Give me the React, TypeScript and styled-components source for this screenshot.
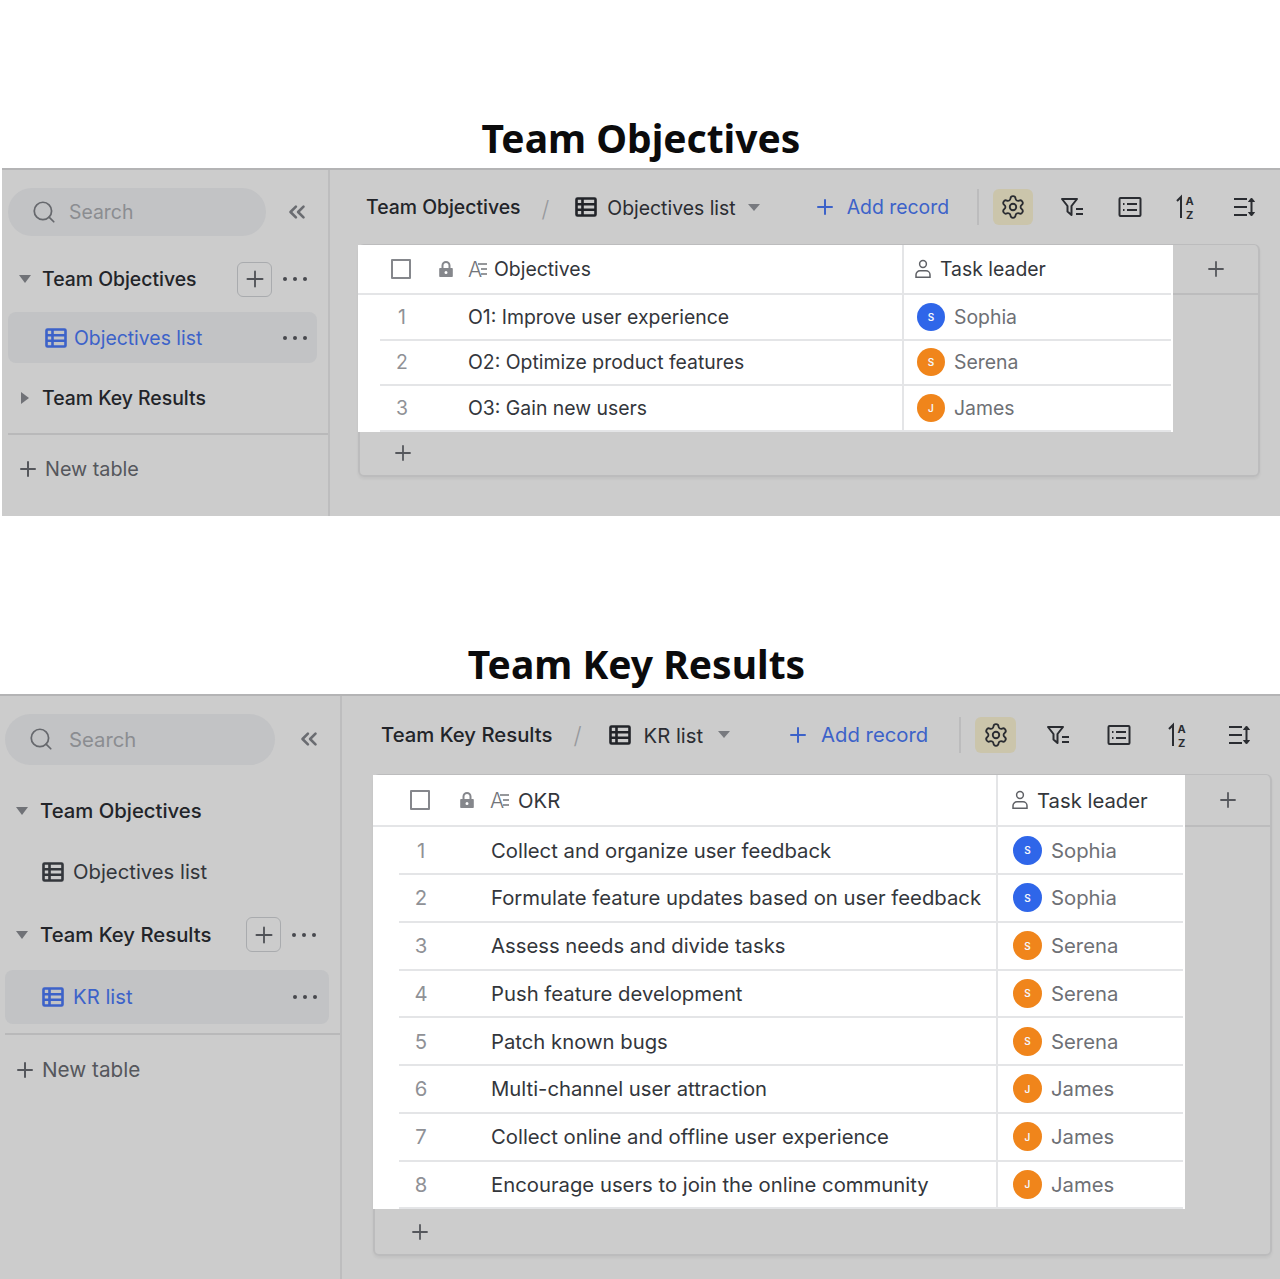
import React from "react";
import styled, { createGlobalStyle } from "styled-components";
import { ChevronsLeft, Plus, Search, Settings } from "lucide-react";

const GlobalStyle = createGlobalStyle`
  html, body { margin: 0; padding: 0; background: #fff; }
  body { font-family: Inter, "Liberation Sans", sans-serif; }
  * { box-sizing: border-box; }
`;

interface Metrics {
  left: number;
  font: number;
  sidebar: number;
  searchW: number;
  searchH: number;
  searchGap: number;
  collapseGap: number;
  groupH: number;
  groupRight: number;
  caretGap: number;
  itemH: number;
  itemW: number;
  itemRight: number;
  itemGap: number;
  sideInset: number;
  newTableLeft: number;
  toolbarH: number;
  mainLeft: number;
  slashRight: number;
  viewLeft: number;
  viewRight: number;
  addGap: number;
  addInnerGap: number;
  dividerGap: number;
  toolW: number;
  iconGap: number;
  frameLeft: number;
  frameRight: number;
  frameBottom: number;
  headerH: number;
  rowH: number;
  firstCol: number;
  secondCol: number;
  rowInset: number;
  indexGap: number;
  avatar: number;
  addRowH: number;
  addRowLeft: number;
  checkGap: number;
  fieldLeft: number;
  fieldRight: number;
  leaderLeft: number;
  ownerLeft: number;
}

const objectivesMetrics: Metrics = {
  left: 2,
  font: 19.4,
  sidebar: 328,
  searchW: 258,
  searchH: 48,
  searchGap: 12,
  collapseGap: 18,
  groupH: 34,
  groupRight: 19,
  caretGap: 11,
  itemH: 51,
  itemW: 309,
  itemRight: 8,
  itemGap: 7,
  sideInset: 6,
  newTableLeft: 14,
  toolbarH: 74,
  mainLeft: 36,
  slashRight: 26,
  viewLeft: 10,
  viewRight: 12,
  addGap: 53,
  addInnerGap: 10,
  dividerGap: 28,
  toolW: 40,
  iconGap: 17,
  frameLeft: 28,
  frameRight: 20,
  frameBottom: 39,
  headerH: 50,
  rowH: 45.6,
  firstCol: 546,
  secondCol: 269,
  rowInset: 22,
  indexGap: 44,
  avatar: 28,
  addRowH: 43,
  addRowLeft: 31,
  checkGap: 27,
  fieldLeft: 14,
  fieldRight: 6,
  leaderLeft: 10,
  ownerLeft: 13,
};

const keyResultsMetrics: Metrics = {
  left: 0,
  font: 20.3,
  sidebar: 342,
  searchW: 270,
  searchH: 51,
  searchGap: 15,
  collapseGap: 21,
  groupH: 36,
  groupRight: 22,
  caretGap: 12,
  itemH: 54,
  itemW: 324,
  itemRight: 10,
  itemGap: 9,
  sideInset: 5,
  newTableLeft: 13,
  toolbarH: 78,
  mainLeft: 39,
  slashRight: 27,
  viewLeft: 13,
  viewRight: 15,
  addGap: 56,
  addInnerGap: 11,
  dividerGap: 31,
  toolW: 41,
  iconGap: 19,
  frameLeft: 31,
  frameRight: 8,
  frameBottom: 24,
  headerH: 52.5,
  rowH: 47.75,
  firstCol: 625,
  secondCol: 187,
  rowInset: 26,
  indexGap: 48,
  avatar: 29,
  addRowH: 45,
  addRowLeft: 33,
  checkGap: 29,
  fieldLeft: 15,
  fieldRight: 8,
  leaderLeft: 13,
  ownerLeft: 15,
};

const Page = styled.div`
  width: 1280px;
  height: 1279px;
  overflow: hidden;
  padding-top: 110px;
`;

const Heading = styled.h1<{ $shift: number; $top: number }>`
  margin: ${(p) => p.$top}px 0 2px;
  padding-right: ${(p) => p.$shift}px;
  padding-left: ${(p) => (p.$shift ? 0 : 2)}px;
  height: 56px;
  line-height: 56px;
  text-align: center;
  font-family: "Noto Sans", "Open Sans", sans-serif;
  font-size: 39px;
  font-weight: 700;
  color: #0b0b0c;
`;

const Panel = styled.section<{ $m: Metrics }>`
  display: flex;
  margin-left: ${(p) => p.$m.left}px;
  background: #cccccc;
  border-top: 2px solid #b4b4b5;
  font-size: ${(p) => p.$m.font}px;
  color: #222429;
`;

const Sidebar = styled.aside<{ $m: Metrics }>`
  flex: 0 0 ${(p) => p.$m.sidebar}px;
  padding-top: 18px;
  border-right: 2px solid #bdbdbe;
`;

const SearchRow = styled.div`
  display: flex;
  align-items: center;
`;

const SearchBox = styled.div<{ $m: Metrics }>`
  display: flex;
  align-items: center;
  gap: ${(p) => p.$m.searchGap}px;
  width: ${(p) => p.$m.searchW}px;
  height: ${(p) => p.$m.searchH}px;
  margin-left: ${(p) => p.$m.sideInset}px;
  padding-left: 23px;
  border-radius: 26px;
  background: #c2c3c5;
  color: #8b8d91;
`;

const Collapse = styled.span<{ $m: Metrics }>`
  display: flex;
  margin-left: ${(p) => p.$m.collapseGap}px;
  color: #6a6c71;
`;

const GroupRow = styled.div<{ $m: Metrics; $top: number }>`
  display: flex;
  align-items: center;
  height: ${(p) => p.$m.groupH}px;
  margin-top: ${(p) => p.$top}px;
  padding-left: ${(p) => p.$m.sideInset + 11}px;
  padding-right: ${(p) => p.$m.groupRight}px;
  font-weight: 500;
`;

const Caret = styled.span<{ $m: Metrics; $open: boolean }>`
  flex: 0 0 auto;
  width: 0;
  height: 0;
  margin-right: ${(p) => (p.$open ? p.$m.caretGap : p.$m.caretGap + 2)}px;
  border-style: solid;
  border-color: transparent;
  ${(p) =>
    p.$open
      ? "border-width: 8px 6px 0; border-top-color: #707277;"
      : "border-width: 6px 0 6px 8px; border-left-color: #707277; margin-left: 2px;"}
`;

const GroupName = styled.span`
  flex: 1;
`;

const AddTableButton = styled.span`
  display: flex;
  align-items: center;
  justify-content: center;
  width: 35px;
  height: 35px;
  margin-right: 11px;
  border: 1px solid #a9abae;
  border-radius: 6px;
  color: #505257;
`;

const Dots = styled.span`
  display: flex;
  gap: 6px;
  width: 26px;

  i {
    width: 4px;
    height: 4px;
    border-radius: 50%;
    background: #47494e;
  }
`;

const ItemRow = styled.div<{ $m: Metrics; $top: number; $active: boolean }>`
  display: flex;
  align-items: center;
  width: ${(p) => p.$m.itemW}px;
  height: ${(p) => p.$m.itemH}px;
  margin: ${(p) => p.$top}px 0 0 ${(p) => p.$m.sideInset}px;
  padding: 0 ${(p) => p.$m.itemRight}px 0 37px;
  border-radius: 8px;
  background: ${(p) => (p.$active ? "#c2c3c5" : "transparent")};
  color: ${(p) => (p.$active ? "#3c62c9" : "#33363b")};
`;

const ItemName = styled.span<{ $m: Metrics }>`
  flex: 1;
  margin-left: ${(p) => p.$m.itemGap}px;
`;

const SideDivider = styled.div<{ $m: Metrics; $top: number }>`
  height: 2px;
  margin: ${(p) => p.$top}px 0 0 ${(p) => p.$m.sideInset}px;
  background: #b9b9ba;
`;

const NewTable = styled.div<{ $m: Metrics }>`
  display: flex;
  align-items: center;
  gap: 5px;
  height: ${(p) => p.$m.groupH}px;
  margin-top: 17px;
  padding-left: ${(p) => p.$m.newTableLeft}px;
  font-size: 1.02em;
  color: #55575c;
`;

const Main = styled.main<{ $m: Metrics }>`
  flex: 1;
  min-width: 0;
  padding-bottom: ${(p) => p.$m.frameBottom}px;
`;

const Toolbar = styled.div<{ $m: Metrics }>`
  display: flex;
  align-items: center;
  height: ${(p) => p.$m.toolbarH}px;
  padding-left: ${(p) => p.$m.mainLeft}px;
`;

const Crumb = styled.span`
  font-weight: 500;
`;

const Slash = styled.span<{ $m: Metrics }>`
  margin: 2px ${(p) => p.$m.slashRight}px 0 21px;
  color: #97999d;
  font-size: 1.15em;
  font-weight: 300;
`;

const ViewName = styled.span<{ $m: Metrics }>`
  margin: 2px ${(p) => p.$m.viewRight}px 0 ${(p) => p.$m.viewLeft}px;
  color: #2b2d32;
`;

const ViewCaret = styled.span`
  width: 0;
  height: 0;
  border-style: solid;
  border-color: transparent;
  border-width: 7px 6px 0;
  border-top-color: #787a7f;
`;

const AddRecord = styled.span<{ $m: Metrics }>`
  display: flex;
  align-items: center;
  gap: ${(p) => p.$m.addInnerGap}px;
  margin-left: ${(p) => p.$m.addGap}px;
  color: #3c62c9;
`;

const ToolDivider = styled.span<{ $m: Metrics }>`
  width: 2px;
  height: 36px;
  margin: 0 14px 0 ${(p) => p.$m.dividerGap}px;
  background: #bcbcbd;
`;

const ToolButtons = styled.div<{ $m: Metrics }>`
  display: flex;
  align-items: center;
  gap: ${(p) => p.$m.iconGap}px;
`;

const ToolButton = styled.span<{ $m: Metrics; $active?: boolean }>`
  display: flex;
  align-items: center;
  justify-content: center;
  width: ${(p) => p.$m.toolW}px;
  height: 36px;
  margin-right: ${(p) => (p.$active ? 3 : 0)}px;
  border-radius: 6px;
  background: ${(p) => (p.$active ? "#cbc5ab" : "transparent")};
  color: #2a2c31;
`;

const Frame = styled.div<{ $m: Metrics }>`
  margin: 0 ${(p) => p.$m.frameRight}px 0 ${(p) => p.$m.frameLeft}px;
  border: 2px solid #bcbcbd;
  border-top-width: 1px;
  border-radius: 6px;
  box-shadow: 0 2px 3px rgba(0, 0, 0, 0.05);
`;

const FrameTop = styled.div`
  display: flex;
  align-items: flex-start;
  margin-left: -2px;
`;

const Sheet = styled.div<{ $m: Metrics }>`
  flex: 0 0 auto;
  width: ${(p) => p.$m.firstCol + p.$m.secondCol}px;
  padding-right: 2px;
  background: #fff;
`;

const HeaderRow = styled.div<{ $m: Metrics }>`
  display: grid;
  grid-template-columns: ${(p) => p.$m.firstCol}px 1fr;
  height: ${(p) => p.$m.headerH}px;
  border-bottom: 2px solid #e4e5e7;
  color: #33363b;
`;

const HeaderMain = styled.div<{ $m: Metrics }>`
  display: flex;
  align-items: center;
  padding-left: ${(p) => p.$m.rowInset + 11}px;
  border-right: 2px solid #e4e5e7;
`;

const Checkbox = styled.span<{ $m: Metrics }>`
  flex: 0 0 20px;
  height: 20px;
  margin-right: ${(p) => p.$m.checkGap}px;
  border: 2px solid #85878c;
  border-radius: 1px;
`;

const FieldIconWrap = styled.span<{ $m: Metrics }>`
  display: flex;
  margin: 0 ${(p) => p.$m.fieldRight}px 0 ${(p) => p.$m.fieldLeft}px;
`;

const HeaderSecond = styled.div<{ $m: Metrics }>`
  display: flex;
  align-items: center;
  gap: 8px;
  padding-left: ${(p) => p.$m.leaderLeft}px;
`;

const Row = styled.div<{ $m: Metrics }>`
  display: grid;
  grid-template-columns: ${(p) => p.$m.firstCol - p.$m.rowInset}px 1fr;
  height: ${(p) => p.$m.rowH}px;
  margin-left: ${(p) => p.$m.rowInset}px;
  border-bottom: 2px solid #e4e5e7;
`;

const RowMain = styled.div`
  display: flex;
  align-items: center;
  border-right: 2px solid #e4e5e7;
  color: #33363b;
  white-space: nowrap;
`;

const RowIndex = styled.span<{ $m: Metrics }>`
  flex: 0 0 44px;
  margin-right: ${(p) => p.$m.indexGap}px;
  text-align: center;
  color: #8f9196;
`;

const RowOwner = styled.div<{ $m: Metrics }>`
  display: flex;
  align-items: center;
  gap: 9px;
  padding-left: ${(p) => p.$m.ownerLeft}px;
  color: #6e7075;
`;

const Avatar = styled.span<{ $m: Metrics; $orange: boolean }>`
  display: flex;
  align-items: center;
  justify-content: center;
  width: ${(p) => p.$m.avatar}px;
  height: ${(p) => p.$m.avatar}px;
  border-radius: 50%;
  background: ${(p) => (p.$orange ? "#f0851b" : "#2f66e9")};
  color: #f4f6fb;
  font-size: 10px;
  font-weight: 600;
`;

const AddColumn = styled.div<{ $m: Metrics }>`
  flex: 1;
  display: flex;
  align-items: center;
  justify-content: center;
  height: ${(p) => p.$m.headerH}px;
  border-bottom: 2px solid #bcbcbd;
  color: #55575c;
`;

const AddRow = styled.div<{ $m: Metrics }>`
  display: flex;
  align-items: center;
  height: ${(p) => p.$m.addRowH}px;
  padding-left: ${(p) => p.$m.addRowLeft}px;
  color: #55575c;
`;

const TableIcon = () => (
  <svg width="22" height="22" viewBox="0 0 22 22" fill="none" stroke="currentColor" strokeWidth="2.6">
    <rect x="1.500" y="2.500" width="19" height="17" rx="1" />
    <path d="M2 8.300h18M2 13.700h18M7.500 3v16" />
  </svg>
);

const FieldIcon = () => (
  <svg width="20" height="30" viewBox="0 -5 20 30" fill="none" stroke="#73757a">
    <text x="0" y="18" fontFamily="Inter, sans-serif" fontSize="21" fontWeight="300" fill="#73757a" stroke="none">
      A
    </text>
    <path d="M10 5h9M13 10h6M13 15h6" strokeWidth="1.500" />
  </svg>
);

const LockIcon = () => (
  <svg width="16" height="18" viewBox="0 0 16 18">
    <path d="M4.500 8V5.500a3.500 3.500 0 0 1 7 0V8" fill="none" stroke="#85878c" strokeWidth="2" />
    <path
      d="M2 8h12a.8.8 0 0 1 .8.8v7.400a.8.8 0 0 1-.8.8H2a.8.8 0 0 1-.8-.8V8.800A.8.8 0 0 1 2 8Zm6 3a1.500 1.500 0 1 0 0 3 1.500 1.500 0 0 0 0-3Z"
      fill="#85878c"
      fillRule="evenodd"
    />
  </svg>
);

const PersonIcon = () => (
  <svg width="18" height="20" viewBox="0 0 18 20" fill="none" stroke="#5f6166" strokeWidth="1.500">
    <circle cx="9" cy="5" r="3.400" />
    <path d="M2 18.200v-2.400a4 4 0 0 1 4-4h6a4 4 0 0 1 4 4v2.400Z" />
  </svg>
);

const FilterIcon = () => (
  <svg width="26" height="24" viewBox="0 0 26 24" fill="none" stroke="currentColor" strokeWidth="2" strokeLinejoin="round">
    <path d="M2 4h15l-5.500 7v9l-4-3.500V11Z" />
    <path d="M16 14h7M16 19h7" />
  </svg>
);

const FieldsIcon = () => (
  <svg width="24" height="24" viewBox="0 0 24 24" fill="none" stroke="currentColor" strokeWidth="2">
    <rect x="1.500" y="3" width="21" height="18" rx="1" />
    <path d="M9 9h10M9 15h10M5 9h1.500M5 15h1.500" />
  </svg>
);

const SortIcon = () => (
  <svg width="24" height="28" viewBox="0 0 24 28" fill="none">
    <path d="M6 25V4L2 8" stroke="currentColor" strokeWidth="2" />
    <text x="10.500" y="12" fontFamily="Inter, sans-serif" fontSize="11" fontWeight="700" fill="currentColor">
      A
    </text>
    <text x="11" y="26" fontFamily="Inter, sans-serif" fontSize="11" fontWeight="700" fill="currentColor">
      Z
    </text>
  </svg>
);

const RowHeightIcon = () => (
  <svg width="24" height="24" viewBox="0 0 24 24" fill="none" stroke="currentColor" strokeWidth="2">
    <path d="M2 4h13M2 12h13M2 20h13M19.500 4v16" />
    <path d="M16.500 6.500 19.500 3l3 3.500ZM16.500 17.500l3 3.500 3-3.500Z" fill="currentColor" strokeWidth="1" />
  </svg>
);

type Leader = "Sophia" | "Serena" | "James";

interface Config {
  metrics: Metrics;
  table: string;
  view: string;
  field: string;
  rows: [string, Leader][];
}

const objectives: Config = {
  metrics: objectivesMetrics,
  table: "Team Objectives",
  view: "Objectives list",
  field: "Objectives",
  rows: [
    ["O1: Improve user experience", "Sophia"],
    ["O2: Optimize product features", "Serena"],
    ["O3: Gain new users", "James"],
  ],
};

const keyResults: Config = {
  metrics: keyResultsMetrics,
  table: "Team Key Results",
  view: "KR list",
  field: "OKR",
  rows: [
    ["Collect and organize user feedback", "Sophia"],
    ["Formulate feature updates based on user feedback", "Sophia"],
    ["Assess needs and divide tasks", "Serena"],
    ["Push feature development", "Serena"],
    ["Patch known bugs", "Serena"],
    ["Multi-channel user attraction", "James"],
    ["Collect online and offline user experience", "James"],
    ["Encourage users to join the online community", "James"],
  ],
};

const ThreeDots = () => (
  <Dots>
    <i />
    <i />
    <i />
  </Dots>
);

function SideTree({ m, second }: { m: Metrics; second: boolean }) {
  if (!second) {
    return (
      <>
        <GroupRow $m={m} $top={26}>
          <Caret $m={m} $open />
          <GroupName>Team Objectives</GroupName>
          <AddTableButton>
            <Plus size={26} strokeWidth={1.7} />
          </AddTableButton>
          <ThreeDots />
        </GroupRow>
        <ItemRow $m={m} $top={16} $active>
          <TableIcon />
          <ItemName $m={m}>Objectives list</ItemName>
          <ThreeDots />
        </ItemRow>
        <GroupRow $m={m} $top={18}>
          <Caret $m={m} $open={false} />
          <GroupName>Team Key Results</GroupName>
        </GroupRow>
        <SideDivider $m={m} $top={18} />
      </>
    );
  }
  return (
    <>
      <GroupRow $m={m} $top={28}>
        <Caret $m={m} $open />
        <GroupName>Team Objectives</GroupName>
      </GroupRow>
      <ItemRow $m={m} $top={16} $active={false}>
        <TableIcon />
        <ItemName $m={m}>Objectives list</ItemName>
      </ItemRow>
      <GroupRow $m={m} $top={18}>
        <Caret $m={m} $open />
        <GroupName>Team Key Results</GroupName>
        <AddTableButton>
          <Plus size={26} strokeWidth={1.7} />
        </AddTableButton>
        <ThreeDots />
      </GroupRow>
      <ItemRow $m={m} $top={17} $active>
        <TableIcon />
        <ItemName $m={m}>KR list</ItemName>
        <ThreeDots />
      </ItemRow>
      <SideDivider $m={m} $top={9} />
    </>
  );
}

function BasePanel({ config, second }: { config: Config; second: boolean }) {
  const m = config.metrics;
  return (
    <Panel $m={m}>
      <Sidebar $m={m}>
        <SearchRow>
          <SearchBox $m={m}>
            <Search size={26} strokeWidth={1.6} color="#66686d" />
            <span>Search</span>
          </SearchBox>
          <Collapse $m={m}>
            <ChevronsLeft size={26} strokeWidth={2.4} />
          </Collapse>
        </SearchRow>
        <SideTree m={m} second={second} />
        <NewTable $m={m}>
          <Plus size={24} strokeWidth={2} />
          <span>New table</span>
        </NewTable>
      </Sidebar>
      <Main $m={m}>
        <Toolbar $m={m}>
          <Crumb>{config.table}</Crumb>
          <Slash $m={m}>/</Slash>
          <TableIcon />
          <ViewName $m={m}>{config.view}</ViewName>
          <ViewCaret />
          <AddRecord $m={m}>
            <Plus size={24} strokeWidth={2} />
            <span>Add record</span>
          </AddRecord>
          <ToolDivider $m={m} />
          <ToolButtons $m={m}>
            <ToolButton $m={m} $active>
              <Settings size={26} strokeWidth={1.7} />
            </ToolButton>
            <ToolButton $m={m}>
              <FilterIcon />
            </ToolButton>
            <ToolButton $m={m}>
              <FieldsIcon />
            </ToolButton>
            <ToolButton $m={m}>
              <SortIcon />
            </ToolButton>
            <ToolButton $m={m}>
              <RowHeightIcon />
            </ToolButton>
          </ToolButtons>
        </Toolbar>
        <Frame $m={m}>
          <FrameTop>
            <Sheet $m={m}>
              <HeaderRow $m={m}>
                <HeaderMain $m={m}>
                  <Checkbox $m={m} />
                  <LockIcon />
                  <FieldIconWrap $m={m}>
                    <FieldIcon />
                  </FieldIconWrap>
                  <span>{config.field}</span>
                </HeaderMain>
                <HeaderSecond $m={m}>
                  <PersonIcon />
                  <span>Task leader</span>
                </HeaderSecond>
              </HeaderRow>
              {config.rows.map(([text, leader], i) => (
                <Row $m={m} key={text}>
                  <RowMain>
                    <RowIndex $m={m}>{i + 1}</RowIndex>
                    <span>{text}</span>
                  </RowMain>
                  <RowOwner $m={m}>
                    <Avatar $m={m} $orange={leader !== "Sophia"}>
                      {leader[0]}
                    </Avatar>
                    <span>{leader}</span>
                  </RowOwner>
                </Row>
              ))}
            </Sheet>
            <AddColumn $m={m}>
              <Plus size={24} strokeWidth={1.8} />
            </AddColumn>
          </FrameTop>
          <AddRow $m={m}>
            <Plus size={24} strokeWidth={1.8} />
          </AddRow>
        </Frame>
      </Main>
    </Panel>
  );
}

export default function App() {
  return (
    <Page>
      <GlobalStyle />
      <Heading $shift={0} $top={0}>
        Team Objectives
      </Heading>
      <BasePanel config={objectives} second={false} />
      <Heading $shift={7} $top={120}>
        Team Key Results
      </Heading>
      <BasePanel config={keyResults} second />
    </Page>
  );
}
